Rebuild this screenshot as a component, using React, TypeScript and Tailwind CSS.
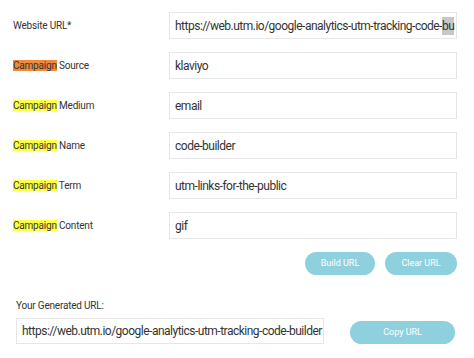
import React from 'react';

const rows = [
  { label: 'Source', value: 'klaviyo', hl: 'bg-[#f08a3c]' },
  { label: 'Medium', value: 'email', hl: 'bg-[#ffff45]' },
  { label: 'Name', value: 'code-builder', hl: 'bg-[#ffff45]' },
  { label: 'Term', value: 'utm-links-for-the-public', hl: 'bg-[#ffff45]' },
  { label: 'Content', value: 'gif', hl: 'bg-[#ffff45]' },
];

const Field: React.FC<{ children: React.ReactNode }> = ({ children }) => (
  <div className="w-[288px] h-[27px] border border-[#e6e6e6] bg-white flex items-center pl-[5px] overflow-hidden whitespace-nowrap text-[12px] tracking-[-0.5px] text-[#333]">
    {children}
  </div>
);

export default function App() {
  return (
    <div
      className="w-[474px] h-[358px] bg-white text-[#333] pt-3"
      style={{ fontFamily: 'Roboto, "Liberation Sans", sans-serif' }}
    >
      <div className="flex flex-col gap-[13px] pl-[13px]">
        <div className="flex items-center">
          <div className="w-[156px] text-[10px] tracking-[-0.2px]">Website URL*</div>
          <Field>
            https://web.utm.io/google-analytics-utm-tracking-code-
            <span className="bg-[#c8c8c8]">bu</span>
          </Field>
        </div>
        {rows.map((r) => (
          <div key={r.label} className="flex items-center">
            <div className="w-[156px] text-[10px] tracking-[-0.2px]">
              <span className={r.hl}>Campaign</span> {r.label}
            </div>
            <Field>{r.value}</Field>
          </div>
        ))}
      </div>

      <div className="flex justify-end gap-[10px] pr-[17px] mt-[13px]">
        <button className="w-[70px] h-[23px] rounded-full bg-[#8ed0de] text-white text-[9px]">
          Build URL
        </button>
        <button className="w-[72px] h-[23px] rounded-full bg-[#8ed0de] text-white text-[9px]">
          Clear URL
        </button>
      </div>

      <div className="pl-[16px] mt-[24px] text-[10px] leading-[14px] tracking-[-0.2px]">
        Your Generated URL:
      </div>

      <div className="flex items-start pl-[16px] mt-[5px]">
        <div className="w-[308px] h-[26px] border border-[#e6e6e6] flex items-center pl-[5px] overflow-hidden whitespace-nowrap text-[12px] tracking-[-0.5px]">
          https://web.utm.io/google-analytics-utm-tracking-code-builder
        </div>
        <button className="ml-[26px] mt-[3px] w-[105px] h-[23px] rounded-full bg-[#8ed0de] text-white text-[9px]">
          Copy URL
        </button>
      </div>
    </div>
  );
}
